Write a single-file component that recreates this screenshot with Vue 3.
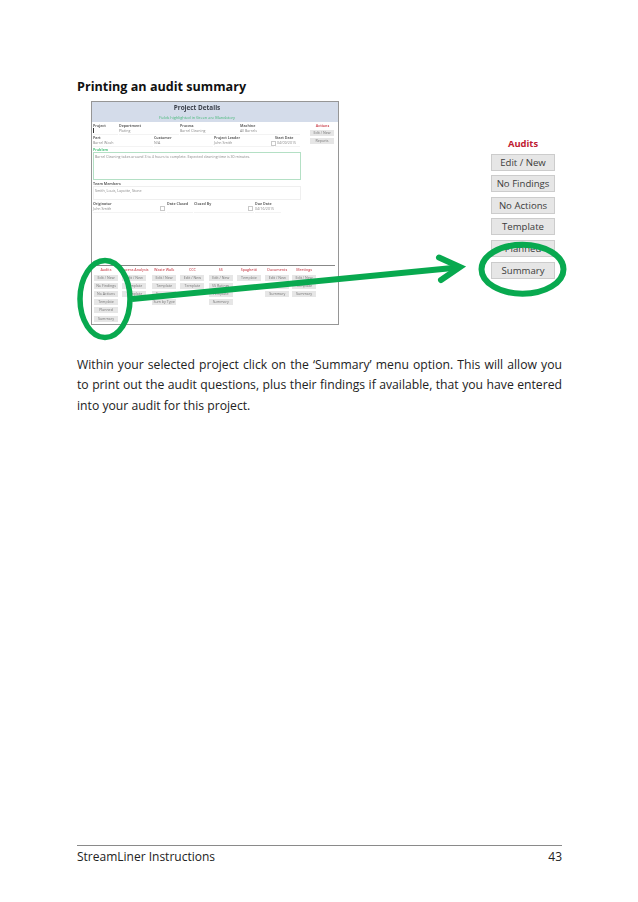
<script setup>
const columns = [
  { title: 'Audits', items: ['Edit / New', 'No Findings', 'No Actions', 'Template', 'Planned', 'Summary'] },
  { title: 'Process Analysis', items: ['Edit / New', 'Template', 'Template'] },
  { title: 'Waste Walk', items: ['Edit / New', 'Template', 'Summary', 'Sum by Type'] },
  { title: 'CCC', items: ['Edit / New', 'Template'] },
  { title: '5S', items: ['Edit / New', '5S Ratings', 'Template', 'Summary'] },
  { title: 'Spaghetti', items: ['Template'] },
  { title: 'Documents', items: ['Edit / New', 'Template', 'Summary'] },
  { title: 'Meetings', items: ['Edit / New', 'Template', 'Summary'] }
]
const menu = ['Edit / New', 'No Findings', 'No Actions', 'Template', 'Planned', 'Summary']
const row1 = [
  { label: 'Project', value: '', w: 26 },
  { label: 'Department', value: 'Plating', w: 61 },
  { label: 'Process', value: 'Barrel Cleaning', w: 60 },
  { label: 'Machine', value: 'All Barrels', w: 61 }
]
const row2 = [
  { label: 'Part', value: 'Barrel Wash', w: 61 },
  { label: 'Customer', value: 'N/A', w: 60 },
  { label: 'Project Leader', value: 'John Smith', w: 61 },
  { label: 'Start Date', value: '04/09/2015', w: 26 }
]
</script>

<template>
  <main class="page">
    <h1 class="heading">Printing an audit summary</h1>
    <section class="figure">
      <div class="shot">
        <header class="band">
          <div class="band-title">Project Details</div>
          <div class="band-note">Fields highlighted in Green are Mandatory</div>
        </header>
        <div class="form">
          <div class="form-main">
            <div class="frow">
              <div v-for="f in row1" :key="f.label" class="field" :style="{ width: f.w + 'px' }">
                <div class="lab">{{ f.label }}</div>
                <div class="val">{{ f.value }}<i v-if="f.label === 'Project'" class="mark"></i></div>
              </div>
            </div>
            <div class="frow">
              <div v-for="f in row2" :key="f.label" class="field" :style="{ width: f.w + 'px' }">
                <div class="lab">{{ f.label }}</div>
                <div class="val"><i v-if="f.label === 'Start Date'" class="pick"></i>{{ f.value }}</div>
              </div>
            </div>
            <div class="lab green">Problem</div>
            <div class="box box-green">Barrel Cleaning takes around 3 to 4 hours to complete. Expected cleaning time is 30 minutes.</div>
            <div class="lab team">Team Members</div>
            <div class="box box-team">Smith, Louis, Lapotte, Stone</div>
            <div class="frow orig">
              <div class="field w74"><div class="lab">Originator</div><div class="val">John Smith<i class="pick end"></i></div></div>
              <div class="field w27"><div class="lab">Date Closed</div><div class="val"></div></div>
              <div class="field w57"><div class="lab">Closed By</div><div class="val"><i class="pick end"></i></div></div>
              <div class="field w27"><div class="lab">Due Date</div><div class="val">04/16/2015</div></div>
            </div>
          </div>
          <aside class="actions">
            <div class="act-title">Actions</div>
            <div class="mini act">Edit / New</div>
            <div class="mini act">Reports</div>
          </aside>
        </div>
        <div class="menus">
          <div v-for="c in columns" :key="c.title" class="menu-col">
            <div class="menu-title">{{ c.title }}</div>
            <div v-for="(b, i) in c.items" :key="i" class="mini">{{ b }}</div>
          </div>
        </div>
      </div>

      <aside class="panel">
        <div class="panel-title">Audits</div>
        <div v-for="m in menu" :key="m" class="big">{{ m }}</div>
      </aside>

      <svg class="overlay" width="638" height="260" viewBox="0 0 638 260" fill="none">
        <ellipse cx="105" cy="204" rx="25" ry="38.5" stroke="#08a94f" stroke-width="5.5" />
        <ellipse cx="522.5" cy="174.2" rx="41" ry="24.5" stroke="#08a94f" stroke-width="6" />
        <path d="M132 204 L458 172.5" stroke="#08a94f" stroke-width="6" />
        <path d="M439 162.5 L460 172 L441 185" stroke="#08a94f" stroke-width="6" stroke-linecap="round" stroke-linejoin="miter" />
      </svg>
    </section>
    <p class="para">Within your selected project click on the ‘Summary’ menu option. This will allow you to print out the audit questions, plus their findings if available, that you have entered into your audit for this project.</p>
    <footer class="foot">
      <span>StreamLiner Instructions</span>
      <span>43</span>
    </footer>
  </main>
</template>

<style scoped>
.page {
  width: 638px;
  height: 902px;
  box-sizing: border-box;
  padding: 78px 76px 0 77px;
  display: flex;
  flex-direction: column;
  font-family: "Open Sans", "Liberation Sans", sans-serif;
  color: #1c1c1c;
  background: #fff;
}
.heading {
  margin: 0;
  font-size: 12.6px;
  line-height: 17px;
  font-weight: 700;
  color: #111;
}
.figure {
  position: relative;
  height: 240px;
  margin: 0 0 0 -77px;
  width: 638px;
}
.overlay {
  position: absolute;
  left: 0;
  top: 0;
}
.shot {
  position: absolute;
  left: 91px;
  top: 6px;
  width: 248px;
  height: 224px;
  box-sizing: border-box;
  border: 1.5px solid #969696;
  display: flex;
  flex-direction: column;
  font-size: 3.6px;
  color: #777;
  filter: blur(0.35px);
}
.band {
  height: 20px;
  padding-right: 36px;
  background: #d4dcea;
  text-align: center;
  flex: none;
}
.band-title {
  font-size: 6.4px;
  font-weight: 700;
  color: #3a3f4a;
  line-height: 12px;
}
.band-note {
  font-size: 3.9px;
  color: #44b877;
  line-height: 6px;
  margin-top: 1px;
}
.form {
  display: flex;
  height: 143px;
  padding: 1px 0 0 1px;
  box-sizing: border-box;
}
.form-main {
  width: 208px;
  flex: none;
}
.frow {
  display: flex;
  gap: 0;
  height: 12px;
}
.field {
  flex: none;
  box-sizing: border-box;
  padding-right: 1px;
}
.lab {
  font-weight: 700;
  line-height: 5px;
  color: #666;
  white-space: nowrap;
}
.val {
  position: relative;
  line-height: 6px;
  height: 6px;
  color: #888;
  border-bottom: 1px solid #f3f3f3;
  white-space: nowrap;
}
.mark {
  position: absolute;
  left: 0;
  top: 0;
  width: 1.4px;
  height: 5px;
  background: #333;
}
.pick {
  display: inline-block;
  width: 3px;
  height: 3px;
  border: 1px solid #c9c9c9;
  margin-right: 1px;
  margin-left: -4px;
  vertical-align: middle;
}
.pick.end {
  position: absolute;
  right: 1px;
  top: 0;
  margin: 0;
}
.green {
  color: #4fc27f;
}
.box {
  box-sizing: border-box;
  width: 208px;
  padding: 1px;
  line-height: 5px;
  color: #888;
}
.box-green {
  height: 28px;
  border: 1px solid #b4e0c5;
}
.team {
  margin-top: 1px;
}
.box-team {
  height: 14px;
  border: 1px solid #efefef;
}
.orig {
  margin-top: 0.5px;
}
.w74 { width: 74px; }
.w27 { width: 27px; }
.w57 { width: 61px; }
.actions {
  margin-left: 9px;
  width: 25px;
  text-align: center;
}
.act-title {
  color: #d0555f;
  font-weight: 700;
  line-height: 5px;
  margin-bottom: 2px;
}
.act {
  width: 25px;
  margin-bottom: 2px;
}
.mini {
  width: 24px;
  height: 6px;
  line-height: 6px;
  background: #e6e6e6;
  text-align: center;
  color: #777;
  white-space: nowrap;
}
.menus {
  flex: 1;
  margin: 0 3px 0 0;
  border-top: 1px solid #888;
  padding: 2px 0 0 2px;
  display: flex;
  gap: 4.3px;
}
.menu-col {
  width: 24px;
  display: flex;
  flex-direction: column;
  gap: 2.2px;
  align-items: center;
}
.menu-col:nth-child(3) {
  margin-left: 1.5px;
}
.menu-col:nth-child(8) {
  margin-left: -1.5px;
}
.menu-title {
  color: #d0555f;
  font-weight: 600;
  line-height: 4.5px;
  white-space: nowrap;
}
.panel {
  position: absolute;
  left: 491px;
  top: 44px;
  width: 64px;
  display: flex;
  flex-direction: column;
  gap: 4.6px;
}
.panel-title {
  color: #c02032;
  font-weight: 700;
  font-size: 9.4px;
  line-height: 10px;
  text-align: center;
  margin-bottom: 0;
}
.big {
  height: 17px;
  box-sizing: border-box;
  border: 1px solid #cccccc;
  background: #e6e6e6;
  color: #3c3c3c;
  font-size: 9.6px;
  line-height: 15px;
  text-align: center;
}
.para {
  margin: 20px 0 0 0;
  font-size: 12.2px;
  line-height: 20.3px;
  color: #222;
  width: 485px;
  text-align: justify;
}
.foot {
  margin-top: auto;
  margin-bottom: 37px;
  width: 485px;
  border-top: 1px solid #8a8a8a;
  padding-top: 2px;
  display: flex;
  justify-content: space-between;
  font-size: 12px;
  line-height: 17px;
  color: #222;
}
</style>

<style>
html, body { background: #fff; }
</style>
